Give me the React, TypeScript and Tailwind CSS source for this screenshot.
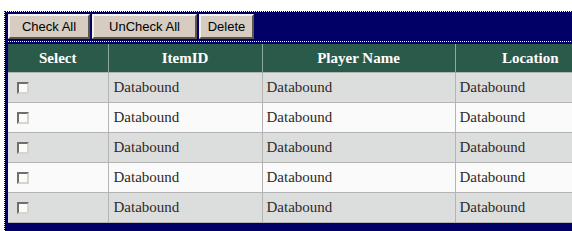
import React from "react";

const rows = [0, 1, 2, 3, 4];

function Box() {
  return (
    <span className="inline-block w-[12px] h-[12px] bg-[#fbfbf8] border-2 border-t-[#6e6e6e] border-l-[#6e6e6e] border-b-[#d8d4cc] border-r-[#d8d4cc] align-middle" />
  );
}

export default function App() {
  const btn =
    "h-[25px] bg-[#d6ccc1] text-[13px] text-black border-2 border-t-[#f4f0ec] border-l-[#f4f0ec] border-b-[#5e564e] border-r-[#5e564e] flex items-center justify-center";
  return (
    <div className="w-[572px] h-[231px] overflow-hidden bg-white pt-[11px] pl-[4px]" style={{ fontFamily: '"Liberation Serif", serif' }}>
      <div className="w-[700px] border border-dotted border-[#000066] bg-[#000066] bg-clip-padding pl-[3px] pt-[2px]">
        <div className="flex gap-[2px] pb-[2px] border-b border-dotted border-white" style={{ fontFamily: '"Liberation Sans", Arial, sans-serif' }}>
          <button className={btn + " w-[82px]"}>Check All</button>
          <button className={btn + " w-[105px]"}>UnCheck All</button>
          <button className={btn + " w-[55px]"}>Delete</button>
        </div>
        <div className="pt-[2px] pb-[20px]">
          <table className="border-collapse text-[15px] border-b border-dotted border-white">
            <thead>
              <tr className="bg-[#2a5b4a] text-white h-[28px]">
                <th className="w-[100px] font-bold border-r border-[#8fa89d]">Select</th>
                <th className="w-[154px] font-bold border-r border-[#8fa89d]">ItemID</th>
                <th className="w-[193px] font-bold border-r border-[#8fa89d]">Player Name</th>
                <th className="w-[150px] font-bold">Location</th>
              </tr>
            </thead>
            <tbody>
              {rows.map((i) => (
                <tr key={i} className={(i % 2 === 0 ? "bg-[#dcdedd]" : "bg-[#fafafa]") + " h-[30px] text-[#2e2a28]"}>
                  <td className="border border-l-0 border-[#b4b4b4] pl-[9px]">
                    <Box />
                  </td>
                  <td className="border border-[#b4b4b4] pl-[5px]">Databound</td>
                  <td className="border border-[#b4b4b4] pl-[4px]">Databound</td>
                  <td className="border border-[#b4b4b4] pl-[4px]">Databound</td>
                </tr>
              ))}
            </tbody>
          </table>
        </div>
      </div>
    </div>
  );
}
